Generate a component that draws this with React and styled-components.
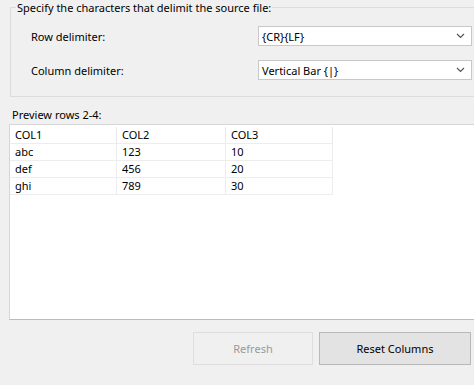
import React from 'react';
import styled, { createGlobalStyle } from 'styled-components';

const GlobalStyle = createGlobalStyle`
  html, body {
    margin: 0;
    padding: 0;
    background: #f0f0f0;
  }
  body {
    font-family: 'Noto Sans', 'Open Sans', sans-serif;
    font-size: 11px;
    color: #000;
  }
`;

const Page = styled.div`
  width: 474px;
  height: 385px;
  box-sizing: border-box;
  padding: 0 0 0 8px;
  display: flex;
  flex-direction: column;
  overflow: hidden;
`;

const GroupBox = styled.fieldset`
  margin: 0 0 0 2px;
  padding: 0;
  height: 97px;
  box-sizing: border-box;
  border: 1px solid #dcdcdc;
  border-right: none;
  min-width: 0;
`;

const Legend = styled.legend`
  padding: 0 1px;
  margin-left: 5px;
  font-size: 11px;
  line-height: 15px;
`;

const GroupBody = styled.div`
  display: flex;
  flex-direction: column;
  gap: 14px;
  padding: 11px 2px 0 20px;
`;

const Row = styled.div`
  display: flex;
  align-items: center;
  justify-content: space-between;
`;

const Label = styled.span`
  font-size: 11px;
`;

const Combo = styled.div`
  width: 214px;
  height: 20px;
  box-sizing: border-box;
  border: 1px solid #c8c8c8;
  background: #fff;
  display: flex;
  align-items: center;
  justify-content: space-between;
  padding: 0 6px 0 3px;
  font-size: 11px;
`;

const Chevron = () => (
  <svg width="9" height="6" viewBox="0 0 9 6">
    <path d="M1 1 L4.5 4.5 L8 1" fill="none" stroke="#555" strokeWidth="1.2" />
  </svg>
);

const Caption = styled.div`
  margin: 8px 0 0 4px;
  height: 19px;
  line-height: 19px;
  font-size: 11px;
`;

const PreviewPanel = styled.div`
  height: 192px;
  margin-left: 1px;
  background: #fff;
  border: 1px solid #d6d6d6;
  border-right: none;
  border-bottom-color: #bcbcbc;
  padding-top: 2px;
`;

const Grid = styled.div`
  display: grid;
  grid-template-columns: 107px 109px 107px;
  width: 323px;
`;

const Cell = styled.div`
  height: 16px;
  line-height: 16px;
  padding-left: 5px;
  border-right: 1px solid ${p => (p.$header ? '#e8e8e8' : '#ededed')};
  border-bottom: 1px solid #ededed;
  font-size: 11px;
  white-space: nowrap;
`;

const ButtonBar = styled.div`
  display: flex;
  justify-content: flex-end;
  gap: 6px;
  padding: 12px 3px 0 0;
`;

const Button = styled.button`
  width: ${p => p.$width}px;
  height: 33px;
  box-sizing: border-box;
  font-family: inherit;
  font-size: 11px;
  background: ${p => (p.disabled ? '#f0f0f0' : '#e3e3e3')};
  color: ${p => (p.disabled ? '#9a9a9a' : '#000')};
  border: 1px solid ${p => (p.disabled ? '#dedede' : '#b8b8b8')};
  border-radius: 0;
  padding: 0;
`;

const columns = ['COL1', 'COL2', 'COL3'];
const rows = [
  ['abc', '123', '10'],
  ['def', '456', '20'],
  ['ghi', '789', '30'],
];

export default function App() {
  return (
    <Page>
      <GlobalStyle />
      <GroupBox>
        <Legend>Specify the characters that delimit the source file:</Legend>
        <GroupBody>
          <Row>
            <Label>Row delimiter:</Label>
            <Combo>
              <span>{'{CR}{LF}'}</span>
              <Chevron />
            </Combo>
          </Row>
          <Row>
            <Label>Column delimiter:</Label>
            <Combo>
              <span>{'Vertical Bar {|}'}</span>
              <Chevron />
            </Combo>
          </Row>
        </GroupBody>
      </GroupBox>
      <Caption>Preview rows 2-4:</Caption>
      <PreviewPanel>
        <Grid>
          {columns.map(c => (
            <Cell key={c} $header>{c}</Cell>
          ))}
          {rows.map(r => r.map((v, i) => <Cell key={r[0] + i}>{v}</Cell>))}
        </Grid>
      </PreviewPanel>
      <ButtonBar>
        <Button $width={120} disabled>Refresh</Button>
        <Button $width={152}>Reset Columns</Button>
      </ButtonBar>
    </Page>
  );
}
